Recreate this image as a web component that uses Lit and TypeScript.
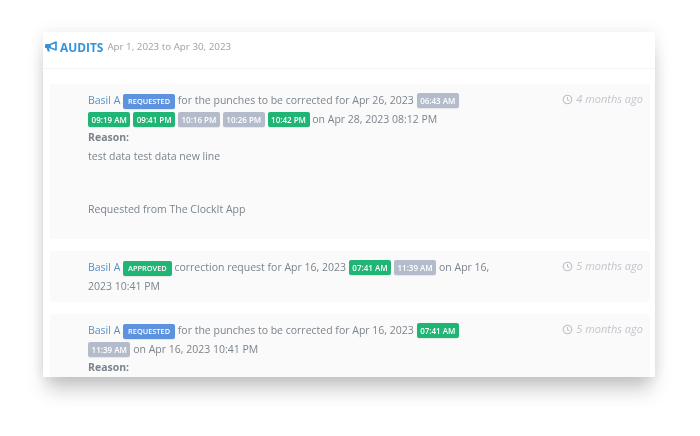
import { LitElement, html, css } from "lit";
import { customElement } from "lit/decorators.js";

const clock = html`<svg class="clock" viewBox="0 0 12 12" width="11" height="11"><circle cx="6" cy="6" r="4.7" fill="none" stroke="currentColor" stroke-width="1.2"/><path d="M6 3.2V6.3L8 7.3" fill="none" stroke="currentColor" stroke-width="1.1"/></svg>`;

@customElement("app-root")
export class AppRoot extends LitElement {
  static styles = css`
    :host { display: block; width: 700px; height: 436px; background: #fff; overflow: hidden; font-family: "Open Sans", sans-serif; }
    .page { padding: 32px 45px 0 43px; filter: blur(0.5px); }
    .card { height: 345px; background: #fff; overflow: hidden; box-shadow: 0 16px 18px -4px rgba(60,60,60,.28), 0 0 14px rgba(60,60,60,.1); }
    .head { height: 37px; box-sizing: border-box; padding: 0 0 7px 2px; border-bottom: 1px solid #f3f4f6; display: flex; align-items: center; gap: 3px; }
    .mega { color: #3493d8; flex: none; }
    .title { color: #3493d8; font-size: 11.9px; font-weight: 700; }
    .range { color: #9aa1a9; font-size: 9.8px; margin-left: 1px; }
    .list { padding: 15px 5px 0 7px; display: flex; flex-direction: column; gap: 12px; }
    .item { background: #fafafb; padding: 7px 7px 0 38px; display: flex; justify-content: space-between; font-size: 10.5px; line-height: 18.7px; color: #7b848c; }
    .i1 { height: 148px; }
    .i2 { height: 44px; }
    .i3 { height: 62px; }
    .main { width: 412px; }
    .name { color: #5b8fc4; }
    .b { display: inline-block; height: 15px; line-height: 15px; padding: 0 3.6px; border-radius: 2px; color: #fff; font-size: 8px; font-weight: 600; vertical-align: 0; box-shadow: 0 1px 1px rgba(0,0,0,.08); }
    .st { font-size: 7.4px; padding: 0 5px; }
    .g { background: #20b574; }
    .y { background: #b4bccb; }
    .u { background: #5c92de; }
    .reason { font-weight: 700; }
    .gap { height: 34px; }
    .ago { display: flex; align-items: center; gap: 3px; height: 16px; font-style: italic; color: #c1c6cc; font-size: 11px; white-space: nowrap; }
    .clock { color: #bcc2c9; flex: none; }
  `;

  render() {
    const b = (t: string, c: string) => html`<span class="b ${c}">${t}</span>`;
    return html`<div class="page"><div class="card">
      <div class="head">
        <svg class="mega" viewBox="0 0 13 11" width="12" height="11"><path fill="currentColor" fill-rule="evenodd" d="M1.6 2.8H5L11 0.2H12.8V9.8H11L5 7.4H4.4L5.2 10.8H2.9L2 7.4H1.6A2.3 2.3 0 0 1 1.6 2.8ZM6.4 4V6.2L11 8V2.2Z"/></svg>
        <span class="title">AUDITS</span><span class="range">Apr 1, 2023 to Apr 30, 2023</span>
      </div>
      <div class="list">
        <div class="item i1">
          <div class="main">
            <span class="name">Basil A</span> ${b("REQUESTED", "st u")} for the punches to be corrected for Apr 26, 2023 ${b("06:43 AM", "y")}
            ${b("09:19 AM", "g")} ${b("09:41 PM", "g")} ${b("10:16 PM", "y")} ${b("10:26 PM", "y")} ${b("10:42 PM", "g")} on Apr 28, 2023 08:12 PM<br />
            <span class="reason">Reason:</span><br />
            test data test data new line
            <div class="gap"></div>
            Requested from The ClockIt App
          </div>
          <div class="ago">${clock}4 months ago</div>
        </div>
        <div class="item i2">
          <div class="main">
            <span class="name">Basil A</span> ${b("APPROVED", "st g")} correction request for Apr 16, 2023 ${b("07:41 AM", "g")} ${b("11:39 AM", "y")} on Apr 16, 2023 10:41 PM
          </div>
          <div class="ago">${clock}5 months ago</div>
        </div>
        <div class="item i3">
          <div class="main">
            <span class="name">Basil A</span> ${b("REQUESTED", "st u")} for the punches to be corrected for Apr 16, 2023 ${b("07:41 AM", "g")}
            ${b("11:39 AM", "y")} on Apr 16, 2023 10:41 PM<br />
            <span class="reason">Reason:</span>
          </div>
          <div class="ago">${clock}5 months ago</div>
        </div>
      </div>
    </div></div>`;
  }
}
